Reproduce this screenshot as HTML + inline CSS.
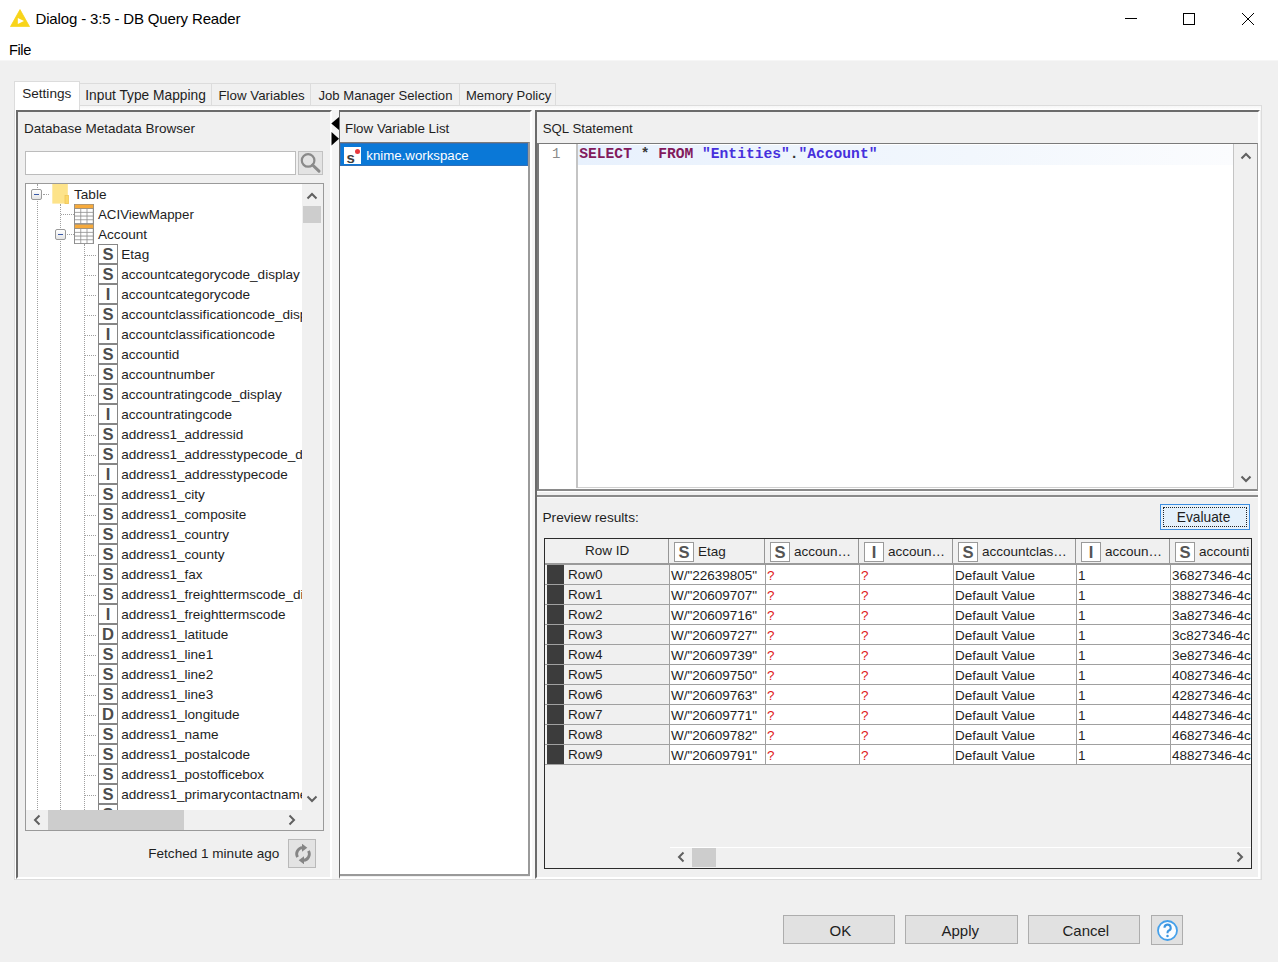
<!DOCTYPE html>
<html><head><meta charset="utf-8">
<style>
*{box-sizing:border-box;margin:0;padding:0}
html,body{width:1278px;height:962px;overflow:hidden;background:#f0f0f0;font-family:"Liberation Sans",sans-serif;font-size:13.5px;color:#1e1e1e}
.a{position:absolute}
.t{position:absolute;white-space:nowrap;line-height:1}
.tab{position:absolute;top:83px;height:22px;border:1px solid #dcdcdc;border-bottom:none;background:#f0f0f0}
.pnl{position:absolute;border-top:2px solid #6b6b6b;border-left:2px solid #6b6b6b;border-right:2px solid #fff;border-bottom:2px solid #fff;background:#f0f0f0}
.ico{position:absolute;width:20px;height:20px;border:1px solid #868686;background:#fff;font-weight:bold;color:#4d4d4d;font-size:16.6px;text-align:center;line-height:20px}
.dv{position:absolute;width:1px;border-left:1px dotted #a0a0a0}
.dh{position:absolute;height:1px;border-top:1px dotted #a0a0a0}
.exp{position:absolute;width:11px;height:11px;border:1px solid #9a9a9a;border-radius:2px;background:linear-gradient(#fff,#e4e4e4)}
.exp:after{content:"";position:absolute;left:2px;top:4px;width:5px;height:1px;background:#3a5aa8}
.sb{position:absolute;background:#f0f0f0}
.btn{position:absolute;border:1px solid #adadad;background:#e1e1e1;text-align:center}
.cell{position:absolute;height:20px;border-bottom:1px solid #a0a0a0;border-right:1px solid #a0a0a0;background:#fff;overflow:hidden;white-space:nowrap}
.q{color:#e02020}
.mono{font-family:"Liberation Mono",monospace}
</style></head><body>
<div class="a" style="left:0;top:0;width:1278px;height:60px;background:#fff"></div>
<div class="a" style="left:0;top:60px;width:1278px;height:1px;background:#f6f6f6"></div>
<svg class="a" style="left:10px;top:9px" width="20" height="18" viewBox="0 0 20 18"><path d="M10 0.6 L19.5 17.6 L0.5 17.6 Z" fill="#f8d41a" stroke="#f8d41a" stroke-width="0.8" stroke-linejoin="round"/><path d="M7.8 9 L14 12 L7.8 15 Z" fill="#fff"/></svg>
<div class="t" style="left:35.50px;top:11.00px;font-size:15.00px;color:#000;letter-spacing:-0.15px">Dialog - 3:5 - DB Query Reader</div>
<svg class="a" style="left:1124px;top:12px" width="132" height="14"><path d="M1 6.5 H13" stroke="#000" stroke-width="1"/><rect x="59.5" y="1.5" width="11" height="11" fill="none" stroke="#000"/><path d="M118 1 L130 13 M130 1 L118 13" stroke="#000" stroke-width="1"/></svg>
<div class="t" style="left:9.00px;top:43.00px;font-size:14.60px;color:#000;letter-spacing:-0.4px">File</div>
<div class="tab" style="left:79px;width:133px"></div>
<div class="tab" style="left:211px;width:100px"></div>
<div class="tab" style="left:310px;width:150px"></div>
<div class="tab" style="left:459px;width:97px"></div>
<div class="t" style="left:85.30px;top:89.00px;font-size:13.75px;">Input Type Mapping</div>
<div class="t" style="left:218.50px;top:89.00px;font-size:13.30px;">Flow Variables</div>
<div class="t" style="left:318.50px;top:89.00px;font-size:13.10px;">Job Manager Selection</div>
<div class="t" style="left:466.00px;top:89.00px;font-size:13.00px;">Memory Policy</div>
<div class="a" style="left:14px;top:105px;width:1248px;height:775px;border:1px solid #dcdcdc;background:#f0f0f0"></div>
<div class="a" style="left:15px;top:106px;width:1246px;height:4px;background:linear-gradient(#f6f6f6,#fff)"></div>
<div class="a" style="left:15px;top:106px;width:1px;height:773px;background:#fff"></div>
<div class="a" style="left:14px;top:81px;width:66px;height:29px;background:#fff;border:1px solid #dcdcdc;border-bottom:none"></div>
<div class="t" style="left:22.20px;top:87.00px;font-size:13.60px;">Settings</div>
<div class="pnl" style="left:16px;top:110px;width:316px;height:769px"></div>
<div class="a" style="left:332px;top:110px;width:7px;height:769px;background:#f4f4f4"></div>
<div class="pnl" style="left:339px;top:110px;width:193px;height:769px;border-left-width:1px"></div>
<div class="a" style="left:532px;top:110px;width:3px;height:769px;background:#f7f7f7"></div>
<div class="pnl" style="left:535px;top:110px;width:725px;height:769px"></div>
<div class="t" style="left:24.00px;top:122.00px;font-size:13.50px;">Database Metadata Browser</div>
<div class="a" style="left:25px;top:151px;width:271px;height:24px;background:#fff;border:1px solid #bcbcbc"></div>
<div class="btn" style="left:298px;top:151px;width:25px;height:24px;background:#e3e3e3;border-color:#c2c2c2"><svg class="a" style="left:0;top:0" width="23" height="22"><circle cx="9.1" cy="8.4" r="6.3" fill="none" stroke="#8a8a8a" stroke-width="2.2"/><path d="M13.6 13 L20 19.2" stroke="#8a8a8a" stroke-width="3" stroke-linecap="round"/></svg></div>
<div class="a" style="left:25px;top:183px;width:299px;height:648px;border:1px solid #9a9a9a;background:#fff;overflow:hidden">
<div class="a" style="left:-26px;top:-184px;width:0;height:0">
<div class="dv" style="left:37px;top:184px;height:640px"></div>
<div class="dv" style="left:60px;top:204px;height:620px"></div>
<div class="dv" style="left:84px;top:244px;height:600px"></div>
<div class="exp" style="left:31px;top:189px"></div>
<div class="dh" style="left:43px;top:194px;width:6px"></div>
<svg class="a" style="left:52px;top:184px" width="17" height="20" viewBox="0 0 17 20"><rect x="0.3" y="0" width="15.5" height="19.6" fill="#fde38a"/><rect x="13" y="11.5" width="3.5" height="8.1" fill="#fbd86a" stroke="#efc658" stroke-width="0.8"/></svg>
<div class="t" style="left:74.00px;top:188.00px;font-size:13.60px;">Table</div>
<div class="dh" style="left:61px;top:214px;width:13px"></div>
<svg class="a" style="left:74px;top:204px" width="20" height="20" viewBox="0 0 20 20"><rect x="0" y="0" width="20" height="20" fill="#8e8e8e"/><rect x="0.8" y="0.6" width="18.4" height="3.6" fill="#f6aa3c"/><rect x="1.0" y="5.0" width="5.4" height="2.9" fill="#fff"/><rect x="1.0" y="8.7" width="5.4" height="2.9" fill="#fff"/><rect x="1.0" y="12.5" width="5.4" height="2.9" fill="#fff"/><rect x="1.0" y="16.2" width="5.4" height="2.9" fill="#fff"/><rect x="7.2" y="5.0" width="5.4" height="2.9" fill="#fff"/><rect x="7.2" y="8.7" width="5.4" height="2.9" fill="#fff"/><rect x="7.2" y="12.5" width="5.4" height="2.9" fill="#fff"/><rect x="7.2" y="16.2" width="5.4" height="2.9" fill="#fff"/><rect x="13.4" y="5.0" width="5.4" height="2.9" fill="#fff"/><rect x="13.4" y="8.7" width="5.4" height="2.9" fill="#fff"/><rect x="13.4" y="12.5" width="5.4" height="2.9" fill="#fff"/><rect x="13.4" y="16.2" width="5.4" height="2.9" fill="#fff"/></svg>
<div class="t" style="left:98.00px;top:208.00px;font-size:13.30px;">ACIViewMapper</div>
<div class="exp" style="left:55px;top:229px"></div>
<div class="dh" style="left:67px;top:234px;width:7px"></div>
<svg class="a" style="left:74px;top:224px" width="20" height="20" viewBox="0 0 20 20"><rect x="0" y="0" width="20" height="20" fill="#8e8e8e"/><rect x="0.8" y="0.6" width="18.4" height="3.6" fill="#f6aa3c"/><rect x="1.0" y="5.0" width="5.4" height="2.9" fill="#fff"/><rect x="1.0" y="8.7" width="5.4" height="2.9" fill="#fff"/><rect x="1.0" y="12.5" width="5.4" height="2.9" fill="#fff"/><rect x="1.0" y="16.2" width="5.4" height="2.9" fill="#fff"/><rect x="7.2" y="5.0" width="5.4" height="2.9" fill="#fff"/><rect x="7.2" y="8.7" width="5.4" height="2.9" fill="#fff"/><rect x="7.2" y="12.5" width="5.4" height="2.9" fill="#fff"/><rect x="7.2" y="16.2" width="5.4" height="2.9" fill="#fff"/><rect x="13.4" y="5.0" width="5.4" height="2.9" fill="#fff"/><rect x="13.4" y="8.7" width="5.4" height="2.9" fill="#fff"/><rect x="13.4" y="12.5" width="5.4" height="2.9" fill="#fff"/><rect x="13.4" y="16.2" width="5.4" height="2.9" fill="#fff"/></svg>
<div class="t" style="left:98.00px;top:228.00px;font-size:13.60px;">Account</div>
<div class="dh" style="left:85px;top:255px;width:11px"></div>
<div class="ico" style="left:98px;top:244px">S</div>
<div class="t" style="left:121.30px;top:248.00px;font-size:13.55px;">Etag</div>
<div class="dh" style="left:85px;top:275px;width:11px"></div>
<div class="ico" style="left:98px;top:264px">S</div>
<div class="t" style="left:121.30px;top:268.00px;font-size:13.55px;">accountcategorycode_display</div>
<div class="dh" style="left:85px;top:295px;width:11px"></div>
<div class="ico" style="left:98px;top:284px">I</div>
<div class="t" style="left:121.30px;top:288.00px;font-size:13.55px;">accountcategorycode</div>
<div class="dh" style="left:85px;top:315px;width:11px"></div>
<div class="ico" style="left:98px;top:304px">S</div>
<div class="t" style="left:121.30px;top:308.00px;font-size:13.55px;">accountclassificationcode_display</div>
<div class="dh" style="left:85px;top:335px;width:11px"></div>
<div class="ico" style="left:98px;top:324px">I</div>
<div class="t" style="left:121.30px;top:328.00px;font-size:13.55px;">accountclassificationcode</div>
<div class="dh" style="left:85px;top:355px;width:11px"></div>
<div class="ico" style="left:98px;top:344px">S</div>
<div class="t" style="left:121.30px;top:348.00px;font-size:13.55px;">accountid</div>
<div class="dh" style="left:85px;top:375px;width:11px"></div>
<div class="ico" style="left:98px;top:364px">S</div>
<div class="t" style="left:121.30px;top:368.00px;font-size:13.55px;">accountnumber</div>
<div class="dh" style="left:85px;top:395px;width:11px"></div>
<div class="ico" style="left:98px;top:384px">S</div>
<div class="t" style="left:121.30px;top:388.00px;font-size:13.55px;">accountratingcode_display</div>
<div class="dh" style="left:85px;top:415px;width:11px"></div>
<div class="ico" style="left:98px;top:404px">I</div>
<div class="t" style="left:121.30px;top:408.00px;font-size:13.55px;">accountratingcode</div>
<div class="dh" style="left:85px;top:435px;width:11px"></div>
<div class="ico" style="left:98px;top:424px">S</div>
<div class="t" style="left:121.30px;top:428.00px;font-size:13.55px;">address1_addressid</div>
<div class="dh" style="left:85px;top:455px;width:11px"></div>
<div class="ico" style="left:98px;top:444px">S</div>
<div class="t" style="left:121.30px;top:448.00px;font-size:13.55px;">address1_addresstypecode_display</div>
<div class="dh" style="left:85px;top:475px;width:11px"></div>
<div class="ico" style="left:98px;top:464px">I</div>
<div class="t" style="left:121.30px;top:468.00px;font-size:13.55px;">address1_addresstypecode</div>
<div class="dh" style="left:85px;top:495px;width:11px"></div>
<div class="ico" style="left:98px;top:484px">S</div>
<div class="t" style="left:121.30px;top:488.00px;font-size:13.55px;">address1_city</div>
<div class="dh" style="left:85px;top:515px;width:11px"></div>
<div class="ico" style="left:98px;top:504px">S</div>
<div class="t" style="left:121.30px;top:508.00px;font-size:13.55px;">address1_composite</div>
<div class="dh" style="left:85px;top:535px;width:11px"></div>
<div class="ico" style="left:98px;top:524px">S</div>
<div class="t" style="left:121.30px;top:528.00px;font-size:13.55px;">address1_country</div>
<div class="dh" style="left:85px;top:555px;width:11px"></div>
<div class="ico" style="left:98px;top:544px">S</div>
<div class="t" style="left:121.30px;top:548.00px;font-size:13.55px;">address1_county</div>
<div class="dh" style="left:85px;top:575px;width:11px"></div>
<div class="ico" style="left:98px;top:564px">S</div>
<div class="t" style="left:121.30px;top:568.00px;font-size:13.55px;">address1_fax</div>
<div class="dh" style="left:85px;top:595px;width:11px"></div>
<div class="ico" style="left:98px;top:584px">S</div>
<div class="t" style="left:121.30px;top:588.00px;font-size:13.55px;">address1_freighttermscode_display</div>
<div class="dh" style="left:85px;top:615px;width:11px"></div>
<div class="ico" style="left:98px;top:604px">I</div>
<div class="t" style="left:121.30px;top:608.00px;font-size:13.55px;">address1_freighttermscode</div>
<div class="dh" style="left:85px;top:635px;width:11px"></div>
<div class="ico" style="left:98px;top:624px">D</div>
<div class="t" style="left:121.30px;top:628.00px;font-size:13.55px;">address1_latitude</div>
<div class="dh" style="left:85px;top:655px;width:11px"></div>
<div class="ico" style="left:98px;top:644px">S</div>
<div class="t" style="left:121.30px;top:648.00px;font-size:13.55px;">address1_line1</div>
<div class="dh" style="left:85px;top:675px;width:11px"></div>
<div class="ico" style="left:98px;top:664px">S</div>
<div class="t" style="left:121.30px;top:668.00px;font-size:13.55px;">address1_line2</div>
<div class="dh" style="left:85px;top:695px;width:11px"></div>
<div class="ico" style="left:98px;top:684px">S</div>
<div class="t" style="left:121.30px;top:688.00px;font-size:13.55px;">address1_line3</div>
<div class="dh" style="left:85px;top:715px;width:11px"></div>
<div class="ico" style="left:98px;top:704px">D</div>
<div class="t" style="left:121.30px;top:708.00px;font-size:13.55px;">address1_longitude</div>
<div class="dh" style="left:85px;top:735px;width:11px"></div>
<div class="ico" style="left:98px;top:724px">S</div>
<div class="t" style="left:121.30px;top:728.00px;font-size:13.55px;">address1_name</div>
<div class="dh" style="left:85px;top:755px;width:11px"></div>
<div class="ico" style="left:98px;top:744px">S</div>
<div class="t" style="left:121.30px;top:748.00px;font-size:13.55px;">address1_postalcode</div>
<div class="dh" style="left:85px;top:775px;width:11px"></div>
<div class="ico" style="left:98px;top:764px">S</div>
<div class="t" style="left:121.30px;top:768.00px;font-size:13.55px;">address1_postofficebox</div>
<div class="dh" style="left:85px;top:795px;width:11px"></div>
<div class="ico" style="left:98px;top:784px">S</div>
<div class="t" style="left:121.30px;top:788.00px;font-size:13.55px;">address1_primarycontactname</div>
<div class="dh" style="left:85px;top:815px;width:11px"></div>
<div class="ico" style="left:98px;top:804px">S</div>
<div class="t" style="left:121.30px;top:808.00px;font-size:13.55px;">address1_primarycontactphone</div>
</div>
<div class="sb" style="left:276px;top:0;width:21px;height:626px"></div>
<div class="a" style="left:277px;top:22px;width:18px;height:17px;background:#cdcdcd"></div>
<svg class="a" style="left:280px;top:8px" width="12" height="8"><path d="M1.5 6.5 L6 2 L10.5 6.5" fill="none" stroke="#606060" stroke-width="2"/></svg>
<svg class="a" style="left:280px;top:611px" width="12" height="8"><path d="M1.5 1.5 L6 6 L10.5 1.5" fill="none" stroke="#606060" stroke-width="2"/></svg>
<div class="sb" style="left:0;top:626px;width:299px;height:21px"></div>
<div class="a" style="left:22px;top:626px;width:136px;height:20px;background:#cdcdcd"></div>
<svg class="a" style="left:7px;top:630px" width="8" height="12"><path d="M6.5 1.5 L2 6 L6.5 10.5" fill="none" stroke="#606060" stroke-width="2"/></svg>
<svg class="a" style="left:262px;top:630px" width="8" height="12"><path d="M1.5 1.5 L6 6 L1.5 10.5" fill="none" stroke="#606060" stroke-width="2"/></svg>
</div>
<div class="t" style="left:148.30px;top:847.00px;font-size:13.55px;">Fetched 1 minute ago</div>
<div class="btn" style="left:288px;top:839px;width:28px;height:29px;background:#e3e3e3;border-color:#b9b9b9"><svg class="a" style="left:3.5px;top:3.5px" width="20" height="20" viewBox="0 0 20 20"><path d="M4.5 13.1 A6.3 6.3 0 0 1 9.5 3.7" fill="none" stroke="#858585" stroke-width="2.8"/><path d="M9 -0.3 L14.3 3.7 L9 7.7Z" fill="#858585"/><path d="M15.5 6.9 A6.3 6.3 0 0 1 10.5 16.3" fill="none" stroke="#858585" stroke-width="2.8"/><path d="M11 12.3 L5.7 16.3 L11 20.3Z" fill="#858585"/></svg></div>
<div class="a" style="left:330px;top:112px;width:1px;height:766px;background:#fff"></div>
<svg class="a" style="left:331px;top:117px" width="9" height="30"><path d="M8 0 V13 L0.3 6.5Z" fill="#000"/><path d="M0.5 15 L8 21.8 L0.5 28.5Z" fill="#000"/></svg>
<div class="t" style="left:345.00px;top:122.00px;font-size:13.35px;">Flow Variable List</div>
<div class="a" style="left:340px;top:142px;width:190px;height:734px;background:#fff;border-top:1px solid #7a7a7a;border-right:2px solid #9a9a9a;border-bottom:2px solid #9a9a9a"></div>
<div class="a" style="left:340px;top:143px;width:188px;height:23px;background:#0a78d7;border:1px solid #2f6fb8"></div>
<div class="a" style="left:344px;top:147px;width:17px;height:17px;background:#fff"><div class="t" style="left:2.5px;top:2.5px;font-weight:bold;font-size:15px;color:#3c3c3c">s</div><div class="a" style="left:10.5px;top:1.5px;width:5px;height:5px;border-radius:50%;background:#e8393e"></div></div>
<div class="t" style="left:366.30px;top:149.00px;font-size:13.25px;color:#fff">knime.workspace</div>
<div class="t" style="left:542.70px;top:122.00px;font-size:13.25px;">SQL Statement</div>
<div class="a" style="left:537px;top:143px;width:721px;height:348px;border-top:1px solid #7a7a7a;border-left:2px solid #7a7a7a;border-right:1px solid #9a9a9a;border-bottom:2px solid #8a8a8a;background:#fff"></div>
<div class="a" style="left:578px;top:487px;width:655px;height:1px;background:#d0d0d0"></div>
<div class="a" style="left:576px;top:144px;width:2px;height:344px;background:#c4c4c4"></div>
<div class="a" style="left:578px;top:145px;width:655px;height:20px;background:linear-gradient(90deg,#e8f1fd,#f2f7fd 60%,#fbfcfe)"></div>
<div class="a" style="left:1233px;top:144px;width:1px;height:344px;background:#c4c4c4"></div>
<div class="sb" style="left:1234px;top:144px;width:23px;height:345px"></div>
<svg class="a" style="left:1240px;top:152px" width="12" height="8"><path d="M1.5 6.5 L6 2 L10.5 6.5" fill="none" stroke="#606060" stroke-width="2"/></svg>
<svg class="a" style="left:1240px;top:475px" width="12" height="8"><path d="M1.5 1.5 L6 6 L10.5 1.5" fill="none" stroke="#606060" stroke-width="2"/></svg>
<div class="t" style="left:552.00px;top:147.00px;font-size:14.00px;font-family:'Liberation Mono',monospace;color:#8a8a8a">1</div>
<div class="t" style="left:579.30px;top:147.00px;font-size:14.62px;font-family:'Liberation Mono',monospace;font-weight:bold;color:#821a5c">SELECT <span style="color:#3a3a3a">*</span> FROM <span style="color:#4630dc">"Entities"</span><span style="color:#333">.</span><span style="color:#4630dc">"Account"</span></div>
<div class="a" style="left:537px;top:491px;width:721px;height:1px;background:#fff"></div>
<div class="a" style="left:537px;top:495px;width:721px;height:2px;background:#8a8a8a"></div>
<div class="a" style="left:537px;top:497px;width:721px;height:1px;background:#fafafa"></div>
<div class="t" style="left:542.50px;top:511.00px;font-size:13.65px;">Preview results:</div>
<div class="btn" style="left:1160px;top:504px;width:90px;height:26px;border-color:#3d8ee0;background:#e5f1fb"><div class="a" style="left:2px;top:2px;right:2px;bottom:2px;border:1px dotted #222"></div></div>
<div class="t" style="left:1176.80px;top:511.00px;font-size:13.75px;">Evaluate</div>
<div class="a" style="left:544px;top:538px;width:708px;height:331px;border:1px solid #2b2b2b;background:#f0f0f0;overflow:hidden">
<div class="a" style="left:-545px;top:-539px;width:0;height:0">
<div class="a" style="left:545px;top:539px;width:125px;height:26px;background:#f0f0f0;border-right:2px solid #969696;border-bottom:2px solid #9a9a9a"></div>
<div class="t" style="left:585.00px;top:544.00px;font-size:13.50px;">Row ID</div>
<div class="a" style="left:669px;top:539px;width:97px;height:26px;background:#f0f0f0;border-right:2px solid #969696;border-bottom:2px solid #9a9a9a"></div>
<div class="ico" style="left:674px;top:542px;width:20px;height:20px;line-height:19px;border-color:#9a9a9a;font-size:16.6px;color:#555">S</div>
<div class="t" style="left:698.00px;top:545.00px;font-size:13.50px;">Etag</div>
<div class="a" style="left:765px;top:539px;width:95px;height:26px;background:#f0f0f0;border-right:2px solid #969696;border-bottom:2px solid #9a9a9a"></div>
<div class="ico" style="left:770px;top:542px;width:20px;height:20px;line-height:19px;border-color:#9a9a9a;font-size:16.6px;color:#555">S</div>
<div class="t" style="left:794.00px;top:545.00px;font-size:13.50px;">accoun&#8230;</div>
<div class="a" style="left:859px;top:539px;width:95px;height:26px;background:#f0f0f0;border-right:2px solid #969696;border-bottom:2px solid #9a9a9a"></div>
<div class="ico" style="left:864px;top:542px;width:20px;height:20px;line-height:19px;border-color:#9a9a9a;font-size:16.6px;color:#555">I</div>
<div class="t" style="left:888.00px;top:545.00px;font-size:13.50px;">accoun&#8230;</div>
<div class="a" style="left:953px;top:539px;width:124px;height:26px;background:#f0f0f0;border-right:2px solid #969696;border-bottom:2px solid #9a9a9a"></div>
<div class="ico" style="left:958px;top:542px;width:20px;height:20px;line-height:19px;border-color:#9a9a9a;font-size:16.6px;color:#555">S</div>
<div class="t" style="left:982.00px;top:545.00px;font-size:13.50px;">accountclas&#8230;</div>
<div class="a" style="left:1076px;top:539px;width:95px;height:26px;background:#f0f0f0;border-right:2px solid #969696;border-bottom:2px solid #9a9a9a"></div>
<div class="ico" style="left:1081px;top:542px;width:20px;height:20px;line-height:19px;border-color:#9a9a9a;font-size:16.6px;color:#555">I</div>
<div class="t" style="left:1105.00px;top:545.00px;font-size:13.50px;">accoun&#8230;</div>
<div class="a" style="left:1170px;top:539px;width:131px;height:26px;background:#f0f0f0;border-right:2px solid #969696;border-bottom:2px solid #9a9a9a"></div>
<div class="ico" style="left:1175px;top:542px;width:20px;height:20px;line-height:19px;border-color:#9a9a9a;font-size:16.6px;color:#555">S</div>
<div class="t" style="left:1199.00px;top:545.00px;font-size:13.50px;">accounti</div>
<div class="a" style="left:545px;top:565px;width:125px;height:20px;background:#f0f0f0;border-bottom:1px solid #a0a0a0;border-right:1px solid #a0a0a0"></div>
<div class="a" style="left:547px;top:565px;width:17px;height:19px;background:#3c3c3c"></div>
<div class="t" style="left:568.00px;top:568.00px;font-size:13.50px;">Row0</div>
<div class="cell" style="left:670px;top:565px;width:96px"><div class="t" style="left:1.00px;top:4.00px;font-size:13.50px;">W/"22639805"</div></div>
<div class="cell" style="left:766px;top:565px;width:94px"><div class="t" style="left:1.00px;top:4.00px;font-size:13.50px;"><span class="q">?</span></div></div>
<div class="cell" style="left:860px;top:565px;width:94px"><div class="t" style="left:1.00px;top:4.00px;font-size:13.50px;"><span class="q">?</span></div></div>
<div class="cell" style="left:954px;top:565px;width:123px"><div class="t" style="left:1.00px;top:4.00px;font-size:13.50px;">Default Value</div></div>
<div class="cell" style="left:1077px;top:565px;width:94px"><div class="t" style="left:1.00px;top:4.00px;font-size:13.50px;">1</div></div>
<div class="cell" style="left:1171px;top:565px;width:130px"><div class="t" style="left:1.00px;top:4.00px;font-size:13.50px;">36827346-4c</div></div>
<div class="a" style="left:545px;top:585px;width:125px;height:20px;background:#f0f0f0;border-bottom:1px solid #a0a0a0;border-right:1px solid #a0a0a0"></div>
<div class="a" style="left:547px;top:585px;width:17px;height:19px;background:#3c3c3c"></div>
<div class="t" style="left:568.00px;top:588.00px;font-size:13.50px;">Row1</div>
<div class="cell" style="left:670px;top:585px;width:96px"><div class="t" style="left:1.00px;top:4.00px;font-size:13.50px;">W/"20609707"</div></div>
<div class="cell" style="left:766px;top:585px;width:94px"><div class="t" style="left:1.00px;top:4.00px;font-size:13.50px;"><span class="q">?</span></div></div>
<div class="cell" style="left:860px;top:585px;width:94px"><div class="t" style="left:1.00px;top:4.00px;font-size:13.50px;"><span class="q">?</span></div></div>
<div class="cell" style="left:954px;top:585px;width:123px"><div class="t" style="left:1.00px;top:4.00px;font-size:13.50px;">Default Value</div></div>
<div class="cell" style="left:1077px;top:585px;width:94px"><div class="t" style="left:1.00px;top:4.00px;font-size:13.50px;">1</div></div>
<div class="cell" style="left:1171px;top:585px;width:130px"><div class="t" style="left:1.00px;top:4.00px;font-size:13.50px;">38827346-4c</div></div>
<div class="a" style="left:545px;top:605px;width:125px;height:20px;background:#f0f0f0;border-bottom:1px solid #a0a0a0;border-right:1px solid #a0a0a0"></div>
<div class="a" style="left:547px;top:605px;width:17px;height:19px;background:#3c3c3c"></div>
<div class="t" style="left:568.00px;top:608.00px;font-size:13.50px;">Row2</div>
<div class="cell" style="left:670px;top:605px;width:96px"><div class="t" style="left:1.00px;top:4.00px;font-size:13.50px;">W/"20609716"</div></div>
<div class="cell" style="left:766px;top:605px;width:94px"><div class="t" style="left:1.00px;top:4.00px;font-size:13.50px;"><span class="q">?</span></div></div>
<div class="cell" style="left:860px;top:605px;width:94px"><div class="t" style="left:1.00px;top:4.00px;font-size:13.50px;"><span class="q">?</span></div></div>
<div class="cell" style="left:954px;top:605px;width:123px"><div class="t" style="left:1.00px;top:4.00px;font-size:13.50px;">Default Value</div></div>
<div class="cell" style="left:1077px;top:605px;width:94px"><div class="t" style="left:1.00px;top:4.00px;font-size:13.50px;">1</div></div>
<div class="cell" style="left:1171px;top:605px;width:130px"><div class="t" style="left:1.00px;top:4.00px;font-size:13.50px;">3a827346-4c</div></div>
<div class="a" style="left:545px;top:625px;width:125px;height:20px;background:#f0f0f0;border-bottom:1px solid #a0a0a0;border-right:1px solid #a0a0a0"></div>
<div class="a" style="left:547px;top:625px;width:17px;height:19px;background:#3c3c3c"></div>
<div class="t" style="left:568.00px;top:628.00px;font-size:13.50px;">Row3</div>
<div class="cell" style="left:670px;top:625px;width:96px"><div class="t" style="left:1.00px;top:4.00px;font-size:13.50px;">W/"20609727"</div></div>
<div class="cell" style="left:766px;top:625px;width:94px"><div class="t" style="left:1.00px;top:4.00px;font-size:13.50px;"><span class="q">?</span></div></div>
<div class="cell" style="left:860px;top:625px;width:94px"><div class="t" style="left:1.00px;top:4.00px;font-size:13.50px;"><span class="q">?</span></div></div>
<div class="cell" style="left:954px;top:625px;width:123px"><div class="t" style="left:1.00px;top:4.00px;font-size:13.50px;">Default Value</div></div>
<div class="cell" style="left:1077px;top:625px;width:94px"><div class="t" style="left:1.00px;top:4.00px;font-size:13.50px;">1</div></div>
<div class="cell" style="left:1171px;top:625px;width:130px"><div class="t" style="left:1.00px;top:4.00px;font-size:13.50px;">3c827346-4c</div></div>
<div class="a" style="left:545px;top:645px;width:125px;height:20px;background:#f0f0f0;border-bottom:1px solid #a0a0a0;border-right:1px solid #a0a0a0"></div>
<div class="a" style="left:547px;top:645px;width:17px;height:19px;background:#3c3c3c"></div>
<div class="t" style="left:568.00px;top:648.00px;font-size:13.50px;">Row4</div>
<div class="cell" style="left:670px;top:645px;width:96px"><div class="t" style="left:1.00px;top:4.00px;font-size:13.50px;">W/"20609739"</div></div>
<div class="cell" style="left:766px;top:645px;width:94px"><div class="t" style="left:1.00px;top:4.00px;font-size:13.50px;"><span class="q">?</span></div></div>
<div class="cell" style="left:860px;top:645px;width:94px"><div class="t" style="left:1.00px;top:4.00px;font-size:13.50px;"><span class="q">?</span></div></div>
<div class="cell" style="left:954px;top:645px;width:123px"><div class="t" style="left:1.00px;top:4.00px;font-size:13.50px;">Default Value</div></div>
<div class="cell" style="left:1077px;top:645px;width:94px"><div class="t" style="left:1.00px;top:4.00px;font-size:13.50px;">1</div></div>
<div class="cell" style="left:1171px;top:645px;width:130px"><div class="t" style="left:1.00px;top:4.00px;font-size:13.50px;">3e827346-4c</div></div>
<div class="a" style="left:545px;top:665px;width:125px;height:20px;background:#f0f0f0;border-bottom:1px solid #a0a0a0;border-right:1px solid #a0a0a0"></div>
<div class="a" style="left:547px;top:665px;width:17px;height:19px;background:#3c3c3c"></div>
<div class="t" style="left:568.00px;top:668.00px;font-size:13.50px;">Row5</div>
<div class="cell" style="left:670px;top:665px;width:96px"><div class="t" style="left:1.00px;top:4.00px;font-size:13.50px;">W/"20609750"</div></div>
<div class="cell" style="left:766px;top:665px;width:94px"><div class="t" style="left:1.00px;top:4.00px;font-size:13.50px;"><span class="q">?</span></div></div>
<div class="cell" style="left:860px;top:665px;width:94px"><div class="t" style="left:1.00px;top:4.00px;font-size:13.50px;"><span class="q">?</span></div></div>
<div class="cell" style="left:954px;top:665px;width:123px"><div class="t" style="left:1.00px;top:4.00px;font-size:13.50px;">Default Value</div></div>
<div class="cell" style="left:1077px;top:665px;width:94px"><div class="t" style="left:1.00px;top:4.00px;font-size:13.50px;">1</div></div>
<div class="cell" style="left:1171px;top:665px;width:130px"><div class="t" style="left:1.00px;top:4.00px;font-size:13.50px;">40827346-4c</div></div>
<div class="a" style="left:545px;top:685px;width:125px;height:20px;background:#f0f0f0;border-bottom:1px solid #a0a0a0;border-right:1px solid #a0a0a0"></div>
<div class="a" style="left:547px;top:685px;width:17px;height:19px;background:#3c3c3c"></div>
<div class="t" style="left:568.00px;top:688.00px;font-size:13.50px;">Row6</div>
<div class="cell" style="left:670px;top:685px;width:96px"><div class="t" style="left:1.00px;top:4.00px;font-size:13.50px;">W/"20609763"</div></div>
<div class="cell" style="left:766px;top:685px;width:94px"><div class="t" style="left:1.00px;top:4.00px;font-size:13.50px;"><span class="q">?</span></div></div>
<div class="cell" style="left:860px;top:685px;width:94px"><div class="t" style="left:1.00px;top:4.00px;font-size:13.50px;"><span class="q">?</span></div></div>
<div class="cell" style="left:954px;top:685px;width:123px"><div class="t" style="left:1.00px;top:4.00px;font-size:13.50px;">Default Value</div></div>
<div class="cell" style="left:1077px;top:685px;width:94px"><div class="t" style="left:1.00px;top:4.00px;font-size:13.50px;">1</div></div>
<div class="cell" style="left:1171px;top:685px;width:130px"><div class="t" style="left:1.00px;top:4.00px;font-size:13.50px;">42827346-4c</div></div>
<div class="a" style="left:545px;top:705px;width:125px;height:20px;background:#f0f0f0;border-bottom:1px solid #a0a0a0;border-right:1px solid #a0a0a0"></div>
<div class="a" style="left:547px;top:705px;width:17px;height:19px;background:#3c3c3c"></div>
<div class="t" style="left:568.00px;top:708.00px;font-size:13.50px;">Row7</div>
<div class="cell" style="left:670px;top:705px;width:96px"><div class="t" style="left:1.00px;top:4.00px;font-size:13.50px;">W/"20609771"</div></div>
<div class="cell" style="left:766px;top:705px;width:94px"><div class="t" style="left:1.00px;top:4.00px;font-size:13.50px;"><span class="q">?</span></div></div>
<div class="cell" style="left:860px;top:705px;width:94px"><div class="t" style="left:1.00px;top:4.00px;font-size:13.50px;"><span class="q">?</span></div></div>
<div class="cell" style="left:954px;top:705px;width:123px"><div class="t" style="left:1.00px;top:4.00px;font-size:13.50px;">Default Value</div></div>
<div class="cell" style="left:1077px;top:705px;width:94px"><div class="t" style="left:1.00px;top:4.00px;font-size:13.50px;">1</div></div>
<div class="cell" style="left:1171px;top:705px;width:130px"><div class="t" style="left:1.00px;top:4.00px;font-size:13.50px;">44827346-4c</div></div>
<div class="a" style="left:545px;top:725px;width:125px;height:20px;background:#f0f0f0;border-bottom:1px solid #a0a0a0;border-right:1px solid #a0a0a0"></div>
<div class="a" style="left:547px;top:725px;width:17px;height:19px;background:#3c3c3c"></div>
<div class="t" style="left:568.00px;top:728.00px;font-size:13.50px;">Row8</div>
<div class="cell" style="left:670px;top:725px;width:96px"><div class="t" style="left:1.00px;top:4.00px;font-size:13.50px;">W/"20609782"</div></div>
<div class="cell" style="left:766px;top:725px;width:94px"><div class="t" style="left:1.00px;top:4.00px;font-size:13.50px;"><span class="q">?</span></div></div>
<div class="cell" style="left:860px;top:725px;width:94px"><div class="t" style="left:1.00px;top:4.00px;font-size:13.50px;"><span class="q">?</span></div></div>
<div class="cell" style="left:954px;top:725px;width:123px"><div class="t" style="left:1.00px;top:4.00px;font-size:13.50px;">Default Value</div></div>
<div class="cell" style="left:1077px;top:725px;width:94px"><div class="t" style="left:1.00px;top:4.00px;font-size:13.50px;">1</div></div>
<div class="cell" style="left:1171px;top:725px;width:130px"><div class="t" style="left:1.00px;top:4.00px;font-size:13.50px;">46827346-4c</div></div>
<div class="a" style="left:545px;top:745px;width:125px;height:20px;background:#f0f0f0;border-bottom:1px solid #a0a0a0;border-right:1px solid #a0a0a0"></div>
<div class="a" style="left:547px;top:745px;width:17px;height:19px;background:#3c3c3c"></div>
<div class="t" style="left:568.00px;top:748.00px;font-size:13.50px;">Row9</div>
<div class="cell" style="left:670px;top:745px;width:96px"><div class="t" style="left:1.00px;top:4.00px;font-size:13.50px;">W/"20609791"</div></div>
<div class="cell" style="left:766px;top:745px;width:94px"><div class="t" style="left:1.00px;top:4.00px;font-size:13.50px;"><span class="q">?</span></div></div>
<div class="cell" style="left:860px;top:745px;width:94px"><div class="t" style="left:1.00px;top:4.00px;font-size:13.50px;"><span class="q">?</span></div></div>
<div class="cell" style="left:954px;top:745px;width:123px"><div class="t" style="left:1.00px;top:4.00px;font-size:13.50px;">Default Value</div></div>
<div class="cell" style="left:1077px;top:745px;width:94px"><div class="t" style="left:1.00px;top:4.00px;font-size:13.50px;">1</div></div>
<div class="cell" style="left:1171px;top:745px;width:130px"><div class="t" style="left:1.00px;top:4.00px;font-size:13.50px;">48827346-4c</div></div>
</div>
<div class="sb" style="left:125px;top:308px;width:600px;height:21px;border-top:1px solid #fff"></div>
<div class="a" style="left:147px;top:309px;width:24px;height:19px;background:#cdcdcd"></div>
<svg class="a" style="left:132px;top:312px" width="8" height="12"><path d="M6.5 1.5 L2 6 L6.5 10.5" fill="none" stroke="#606060" stroke-width="2"/></svg>
<svg class="a" style="left:691px;top:312px" width="8" height="12"><path d="M1.5 1.5 L6 6 L1.5 10.5" fill="none" stroke="#606060" stroke-width="2"/></svg>
</div>
<div class="btn" style="left:783px;top:915px;width:112px;height:29px"></div>
<div class="t" style="left:829.50px;top:923.00px;font-size:15.00px;">OK</div>
<div class="btn" style="left:905px;top:915px;width:113px;height:29px"></div>
<div class="t" style="left:941.50px;top:923.00px;font-size:15.00px;">Apply</div>
<div class="btn" style="left:1028px;top:915px;width:112px;height:29px"></div>
<div class="t" style="left:1062.50px;top:923.00px;font-size:15.00px;">Cancel</div>
<div class="btn" style="left:1151px;top:915px;width:32px;height:30px"><svg class="a" style="left:4px;top:3px" width="23" height="23" viewBox="0 0 23 23"><circle cx="11.5" cy="11.5" r="9.5" fill="#fbfdff" stroke="#45a0ea" stroke-width="1.8"/><path d="M8.5 8.8 A3.1 3.1 0 1 1 12.5 11.7 Q11.5 12.4 11.5 14.2" fill="none" stroke="#3b95e0" stroke-width="2.1"/><circle cx="11.5" cy="17" r="1.25" fill="#3b95e0"/></svg></div>
</body></html>
